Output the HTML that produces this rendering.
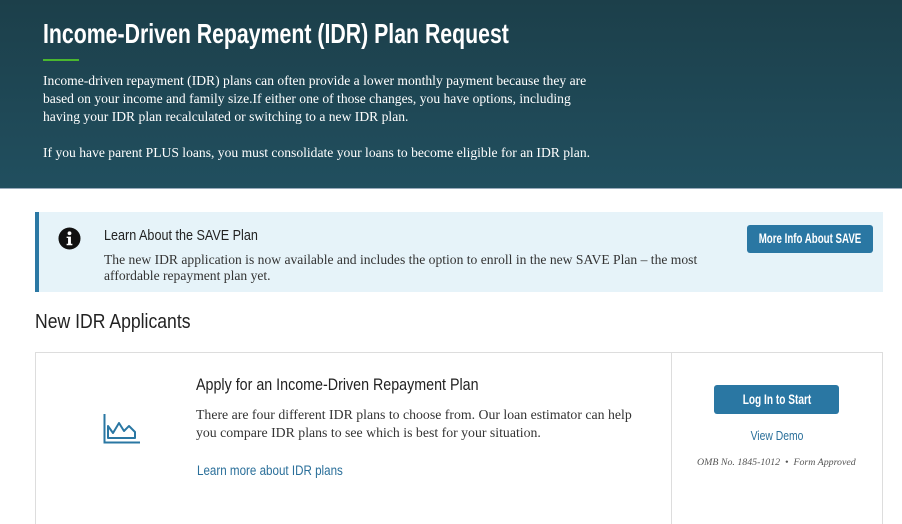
<!DOCTYPE html>
<html><head><meta charset="utf-8"><style>
*{margin:0;padding:0;box-sizing:border-box}
html,body{width:902px;height:524px;overflow:hidden}
body{background:#fff;font-family:"Liberation Serif",serif;color:#222;position:relative}
.n{font-family:"Liberation Sans",sans-serif;display:inline-block;transform:scaleX(.84);transform-origin:left top;white-space:nowrap}
.bt{position:absolute;left:50%;top:0;font-family:"Liberation Sans",sans-serif;white-space:nowrap;transform:translateX(-50%) scaleX(.75)}
.hero{position:absolute;left:0;top:0;width:902px;height:189px;background:linear-gradient(#1c3f4a,#214f5f);border-bottom:1px solid #9ab}
.abs{position:absolute;white-space:nowrap}
.gl{position:absolute;left:43px;top:59px;width:36px;height:2px;background:#4ab72f}
.hp{position:absolute;left:43px;top:72px;font-size:13.6px;line-height:18px;color:#fff;width:562px}
.alert{position:absolute;left:35px;top:212px;width:848px;height:80px;background:#e6f3f9;border-left:4px solid #2b78a4}
.btn{position:absolute;background:#2a77a3;color:#fff;border-radius:3px;font-size:13.5px;font-weight:bold;overflow:hidden}
.card{position:absolute;left:35px;top:352px;width:848px;height:180px;border:1px solid #ddd;border-bottom:none;background:#fff}
</style></head><body>
<div class="hero"></div>
<div class="abs" style="left:43px;top:18px;font-size:28px;color:#fff;font-weight:bold"><span class="n" style="transform:scaleX(.76)">Income-Driven Repayment (IDR) Plan Request</span></div>
<div class="gl"></div>
<div class="hp">Income-driven repayment (IDR) plans can often provide a lower monthly payment because they are based on your income and family size.If either one of those changes, you have options, including having your IDR plan recalculated or switching to a new IDR plan.<br><br>If you have parent PLUS loans, you must consolidate your loans to become eligible for an IDR plan.</div>
<div class="alert"></div>
<svg class="abs" style="left:58px;top:227px" width="23" height="23" viewBox="0 0 24 24"><circle cx="12" cy="12" r="11.5" fill="#111"/><circle cx="12" cy="6.5" r="2" fill="#fff"/><path d="M9 10h4.5v7.5H15V19H9v-1.5h1.5v-6H9z" fill="#fff"/></svg>
<div class="abs" style="left:104px;top:227px;font-size:15px;color:#222"><span class="n">Learn About the SAVE Plan</span></div>
<div class="abs" style="left:104px;top:252px;font-size:13.6px;line-height:15.5px;color:#333">The new IDR application is now available and includes the option to enroll in the new SAVE Plan – the most<br>affordable repayment plan yet.</div>
<div class="btn" style="left:747px;top:225px;width:126px;height:28px;line-height:28px"><div class="bt" style="transform:translateX(-50%) scaleX(.72)">More Info About SAVE</div></div>
<div class="abs" style="left:35px;top:311px;font-size:20px;color:#222"><span class="n" style="transform:scaleX(.88)">New IDR Applicants</span></div>
<div class="card"></div>
<div class="abs" style="left:671px;top:353px;width:1px;height:171px;background:#ddd"></div>
<svg class="abs" style="left:103px;top:414px" width="38" height="30" viewBox="0 0 38 30"><path d="M1.5 0v28.5H37" fill="none" stroke="#2a77a3" stroke-width="2"/><path d="M5 24V12l5 7 6-10 5 8 5-5 6 6v6z" fill="none" stroke="#2a77a3" stroke-width="2" stroke-linejoin="round"/></svg>
<div class="abs" style="left:196px;top:375px;font-size:17px;color:#222"><span class="n">Apply for an Income-Driven Repayment Plan</span></div>
<div class="abs" style="left:196px;top:406px;font-size:13.8px;line-height:18px;color:#333">There are four different IDR plans to choose from. Our loan estimator can help<br>you compare IDR plans to see which is best for your situation.</div>
<div class="abs" style="left:197px;top:463px;font-size:13.5px;color:#2a6f9a"><span class="n" style="transform:scaleX(.86)">Learn more about IDR plans</span></div>
<div class="btn" style="left:714px;top:385px;width:125px;height:29px;line-height:29px"><div class="bt">Log In to Start</div></div>
<div class="abs" style="left:714px;top:429px;width:125px;height:16px;font-size:12.5px;color:#2a6f9a"><div class="bt" style="font-weight:normal;transform:translateX(-50%) scaleX(.83)">View Demo</div></div>
<div class="abs" style="left:697px;top:457px;font-size:9.9px;font-style:italic;color:#555">OMB No. 1845-1012 &nbsp;•&nbsp; Form Approved</div>
</body></html>
